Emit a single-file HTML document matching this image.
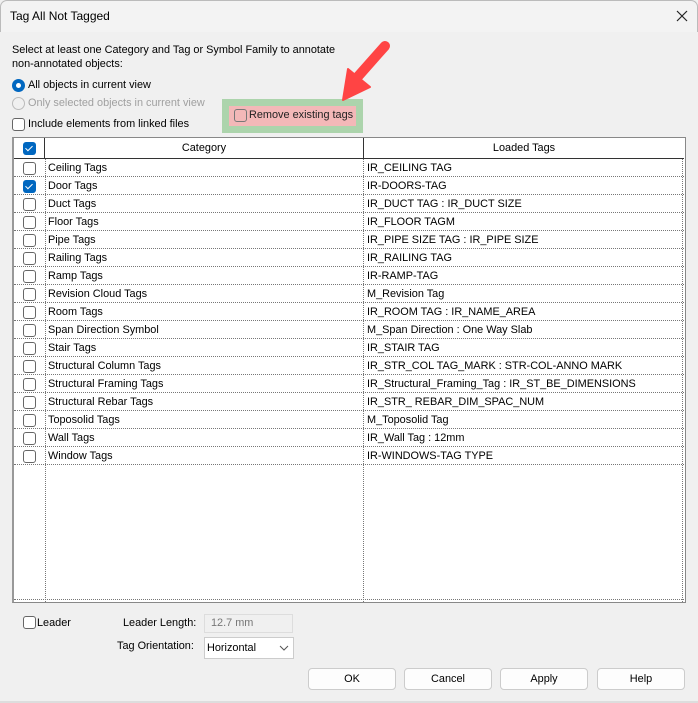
<!DOCTYPE html>
<html><head><meta charset="utf-8"><style>
*{box-sizing:border-box;margin:0;padding:0}
body{width:698px;height:703px;overflow:hidden;background:#f0f0f0;font-family:"Liberation Sans",sans-serif;font-size:10.9px;color:#000;position:relative}
.abs{position:absolute}
.title{left:0;top:0;width:698px;height:32px;background:#f3f3f3;border:1px solid #bbb;border-bottom:none;border-radius:7px 7px 0 0}
.cb{position:absolute;width:13px;height:13px;border:1px solid #666;border-radius:3px;background:#fff}
.cbc{position:absolute;width:13px;height:13px;border-radius:3px;background:#0067c0}
.cbc:after{content:"";position:absolute;left:4px;top:2px;width:3px;height:6px;border:solid #fff;border-width:0 1px 1px 0;transform:rotate(45deg)}
.grid{left:12px;top:137px;width:674px;height:466px;background:#fff;border:1px solid #888;border-left:2px solid #999}
.hdr{position:absolute;top:0;height:21px;border-bottom:1px solid #333;text-align:center;line-height:21px;background:#fff}
.row{position:absolute;left:0;width:670px;height:18px;border-bottom:1px dotted #777}
.row span{position:absolute;top:1px;line-height:17px;color:#000}
.btn{position:absolute;top:668px;width:88px;height:22px;border:1px solid #ccc;border-radius:4px;background:#fdfdfd;text-align:center;line-height:20px}
</style></head><body>
<div class="abs title"></div>
<div class="abs" style="left:10px;top:9px;font-size:12px">Tag All Not Tagged</div>
<svg class="abs" style="left:676px;top:10px" width="12" height="12"><path d="M1 1L11 11M11 1L1 11" stroke="#222" stroke-width="1.2"/></svg>
<div class="abs" style="left:12px;top:43px;line-height:14px">Select at least one Category and Tag or Symbol Family to annotate<br>non-annotated objects:</div>
<div class="abs" style="left:12px;top:79px;width:13px;height:13px;border-radius:50%;background:#0067c0"><div style="margin:4px;width:5px;height:5px;border-radius:50%;background:#fff"></div></div>
<div class="abs" style="left:28px;top:79px">All objects in current view</div>
<div class="abs" style="left:12px;top:97px;width:13px;height:13px;border-radius:50%;border:1px solid #bbb"></div>
<div class="abs" style="left:28px;top:97px;color:#a0a0a0">Only selected objects in current view</div>
<div class="cb" style="left:12px;top:118px"></div>
<div class="abs" style="left:28px;top:118px">Include elements from linked files</div>
<div class="abs" style="left:222px;top:99px;width:141px;height:34px;background:#acd4ac"></div>
<div class="abs" style="left:229px;top:106px;width:127px;height:20px;background:#f3b8b8"></div>
<div class="cb" style="left:234px;top:109px;background:transparent;border-color:#777"></div>
<div class="abs" style="left:249px;top:109px;color:#222">Remove existing tags</div>
<svg class="abs" style="left:330px;top:35px" width="70" height="75"><path d="M55 11L24 46" stroke="#f44" stroke-width="10" stroke-linecap="round"/><path d="M13 65L18 34L40 52Z" fill="#f44" stroke="#f44" stroke-width="2" stroke-linejoin="round"/></svg>
<div class="abs grid">
<div class="hdr" style="left:0;width:31px;border-right:1px solid #333"><div class="cbc" style="left:9px;top:4px"></div></div>
<div class="hdr" style="left:31px;width:319px;border-right:1px solid #333">Category</div>
<div class="hdr" style="left:350px;width:320px">Loaded Tags</div>
<div style="position:absolute;left:31px;top:21px;height:443px;border-left:1px dotted #777"></div>
<div style="position:absolute;left:349px;top:21px;height:443px;border-left:1px dotted #777"></div>
<div style="position:absolute;left:0;top:21px;">
<div class="row" style="top:0"><div class="cb" style="left:9px;top:3px"></div><span style="left:34px">Ceiling Tags</span><span style="left:353px">IR_CEILING TAG</span></div>
<div class="row" style="top:18px"><div class="cbc" style="left:9px;top:3px"></div><span style="left:34px">Door Tags</span><span style="left:353px">IR-DOORS-TAG</span></div>
<div class="row" style="top:36px"><div class="cb" style="left:9px;top:3px"></div><span style="left:34px">Duct Tags</span><span style="left:353px">IR_DUCT TAG : IR_DUCT SIZE</span></div>
<div class="row" style="top:54px"><div class="cb" style="left:9px;top:3px"></div><span style="left:34px">Floor Tags</span><span style="left:353px">IR_FLOOR TAGM</span></div>
<div class="row" style="top:72px"><div class="cb" style="left:9px;top:3px"></div><span style="left:34px">Pipe Tags</span><span style="left:353px">IR_PIPE SIZE TAG : IR_PIPE SIZE</span></div>
<div class="row" style="top:90px"><div class="cb" style="left:9px;top:3px"></div><span style="left:34px">Railing Tags</span><span style="left:353px">IR_RAILING TAG</span></div>
<div class="row" style="top:108px"><div class="cb" style="left:9px;top:3px"></div><span style="left:34px">Ramp Tags</span><span style="left:353px">IR-RAMP-TAG</span></div>
<div class="row" style="top:126px"><div class="cb" style="left:9px;top:3px"></div><span style="left:34px">Revision Cloud Tags</span><span style="left:353px">M_Revision Tag</span></div>
<div class="row" style="top:144px"><div class="cb" style="left:9px;top:3px"></div><span style="left:34px">Room Tags</span><span style="left:353px">IR_ROOM TAG : IR_NAME_AREA</span></div>
<div class="row" style="top:162px"><div class="cb" style="left:9px;top:3px"></div><span style="left:34px">Span Direction Symbol</span><span style="left:353px">M_Span Direction : One Way Slab</span></div>
<div class="row" style="top:180px"><div class="cb" style="left:9px;top:3px"></div><span style="left:34px">Stair Tags</span><span style="left:353px">IR_STAIR TAG</span></div>
<div class="row" style="top:198px"><div class="cb" style="left:9px;top:3px"></div><span style="left:34px">Structural Column Tags</span><span style="left:353px">IR_STR_COL TAG_MARK : STR-COL-ANNO MARK</span></div>
<div class="row" style="top:216px"><div class="cb" style="left:9px;top:3px"></div><span style="left:34px">Structural Framing Tags</span><span style="left:353px">IR_Structural_Framing_Tag : IR_ST_BE_DIMENSIONS</span></div>
<div class="row" style="top:234px"><div class="cb" style="left:9px;top:3px"></div><span style="left:34px">Structural Rebar Tags</span><span style="left:353px">IR_STR_ REBAR_DIM_SPAC_NUM</span></div>
<div class="row" style="top:252px"><div class="cb" style="left:9px;top:3px"></div><span style="left:34px">Toposolid Tags</span><span style="left:353px">M_Toposolid Tag</span></div>
<div class="row" style="top:270px"><div class="cb" style="left:9px;top:3px"></div><span style="left:34px">Wall Tags</span><span style="left:353px">IR_Wall Tag : 12mm</span></div>
<div class="row" style="top:288px"><div class="cb" style="left:9px;top:3px"></div><span style="left:34px">Window Tags</span><span style="left:353px">IR-WINDOWS-TAG TYPE</span></div>
</div>
<div style="position:absolute;left:0;top:461px;width:670px;border-bottom:1px dotted #777"></div>
<div style="position:absolute;left:668px;top:21px;height:443px;border-left:1px dotted #777"></div>
</div>
<div class="cb" style="left:23px;top:616px"></div>
<div class="abs" style="left:37px;top:617px">Leader</div>
<div class="abs" style="left:123px;top:617px">Leader Length:</div>
<div class="abs" style="left:204px;top:614px;width:89px;height:19px;border:1px solid #ddd;background:#f0f0f0;color:#777;padding:2px 6px">12.7 mm</div>
<div class="abs" style="left:117px;top:640px">Tag Orientation:</div>
<div class="abs" style="left:204px;top:637px;width:90px;height:22px;border:1px solid #ccc;background:#fff;padding:4px 2px">Horizontal</div>
<svg class="abs" style="left:279px;top:645px" width="10" height="6"><path d="M1 1L5 5L9 1" stroke="#555" fill="none"/></svg>
<div class="btn" style="left:308px">OK</div>
<div class="btn" style="left:404px">Cancel</div>
<div class="btn" style="left:500px">Apply</div>
<div class="btn" style="left:597px">Help</div>
<div class="abs" style="left:0;top:701px;width:698px;height:2px;background:#ddd"></div>
</body></html>
